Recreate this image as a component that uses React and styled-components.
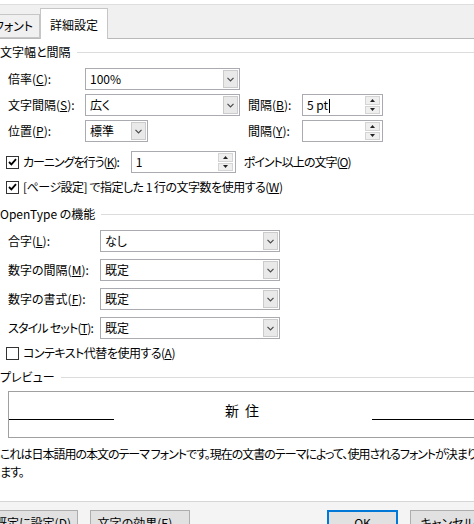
import styled, { createGlobalStyle } from "styled-components";

const GlobalStyle = createGlobalStyle`
  html, body {
    margin: 0;
    padding: 0;
    background: #ffffff;
    overflow: hidden;
  }
  body {
    font-family: "Noto Sans CJK JP", "Noto Sans", sans-serif;
    font-size: 12px;
    line-height: 16px;
    color: #000;
    font-feature-settings: "palt";
  }
  #root {
    width: 474px;
    height: 524px;
    overflow: hidden;
  }
`;

const Dialog = styled.div`
  width: 500px;
  margin-left: -12px;
  display: flex;
  flex-direction: column;
  background: #fff;
`;

const TabStrip = styled.div`
  margin-top: 4px;
  height: 33px;
  background: #f0f0f0;
  border-top: 1px solid #dedede;
  border-bottom: 1px solid #b9b9b9;
  display: flex;
  align-items: flex-end;
`;

const Tab = styled.div`
  width: ${({ $w }) => $w}px;
  height: ${({ $active }) => ($active ? 31 : 24)}px;
  margin-bottom: ${({ $active }) => ($active ? -1 : 0)}px;
  box-sizing: border-box;
  display: flex;
  align-items: center;
  justify-content: center;
  background: ${({ $active }) => ($active ? "#fff" : "#f0f0f0")};
  border: 1px solid #c6c6c6;
  border-bottom: ${({ $active }) => ($active ? "none" : "1px solid #c6c6c6")};
  border-left: ${({ $active }) => ($active ? "1px solid #c6c6c6" : "none")};
  padding-top: ${({ $active }) => ($active ? 2 : 0)}px;
`;

const Content = styled.div`
  padding-left: 12px;
  display: flex;
  flex-direction: column;
`;

const SectionTitle = styled.div`
  display: flex;
  align-items: center;
  height: 16px;
  margin-top: ${({ $mt }) => $mt}px;
  &::after {
    content: "";
    flex: 1;
    border-top: 1px solid #dcdcdc;
    margin-left: 6px;
    margin-top: 1px;
  }
`;

const FieldGrid = styled.div`
  display: grid;
  grid-template-columns: ${({ $cols }) => $cols};
  grid-auto-rows: 22px;
  row-gap: ${({ $gap }) => $gap}px;
  align-items: center;
  padding-left: 8px;
  margin-top: ${({ $mt }) => $mt}px;
`;

const Label = styled.span`
  white-space: nowrap;
  grid-column: ${({ $col }) => $col || "auto"};
  letter-spacing: ${({ $ls }) => $ls || 0}px;
`;

const Key = styled.span`
  text-decoration: underline;
  text-underline-offset: 1px;
`;

const ComboBox = styled.div`
  width: ${({ $w }) => $w}px;
  height: 22px;
  box-sizing: border-box;
  border: 1px solid #a9abb0;
  background: #fff;
  display: flex;
  align-items: center;
`;

const Value = styled.span`
  flex: 1;
  padding-left: 4px;
  white-space: nowrap;
  overflow: hidden;
`;

const DropButton = styled.span`
  width: 15px;
  height: 18px;
  margin-right: 1px;
  box-sizing: border-box;
  background: #e9e9e9;
  border: 1px solid #cbcbcb;
  display: flex;
  align-items: center;
  justify-content: center;
`;

const SpinBox = styled.div`
  width: ${({ $w }) => $w}px;
  height: 22px;
  box-sizing: border-box;
  border: 1px solid #a9abb0;
  background: #fff;
  display: flex;
  align-items: center;
  letter-spacing: 0;
`;

const SpinButtons = styled.span`
  width: 15px;
  height: 18px;
  margin-right: 2px;
  display: flex;
  flex-direction: column;
  gap: 1px;
`;

const SpinPart = styled.span`
  flex: 1;
  background: #efefef;
  border: 1px solid #d4d4d4;
  display: flex;
  align-items: center;
  justify-content: center;
`;

const Caret = styled.span`
  display: inline-block;
  width: 1px;
  height: 14px;
  background: #000;
  vertical-align: -3px;
  margin-left: 1px;
`;

const CheckRow = styled.div`
  display: flex;
  align-items: center;
  height: 22px;
  margin-top: ${({ $mt }) => $mt}px;
  padding-left: 6px;
  white-space: nowrap;
  letter-spacing: ${({ $ls }) => $ls}px;
`;

const Box = styled.span`
  width: 13px;
  height: 13px;
  box-sizing: border-box;
  border: 1px solid #333;
  background: #fff;
  display: flex;
  align-items: center;
  justify-content: center;
  margin-right: 4px;
  flex: none;
`;

const InlineSpin = styled(SpinBox)`
  margin-left: ${({ $ml }) => $ml}px;
  margin-right: 8px;
`;

const PreviewBox = styled.div`
  margin: 6px 0 0 8px;
  height: 47px;
  box-sizing: border-box;
  border: 1px solid #a0a0a0;
  border-right: none;
  display: flex;
  align-items: flex-end;
  padding-bottom: 17px;
`;

const Rule = styled.span`
  width: ${({ $w }) => ($w ? `${$w}px` : "auto")};
  flex: ${({ $w }) => ($w ? "none" : 1)};
  border-bottom: 1px solid #000;
`;

const PreviewText = styled.span`
  width: 254px;
  text-align: center;
  font-size: 14px;
  line-height: 16px;
  letter-spacing: 6px;
  margin-bottom: 2px;
  padding-left: 4px;
`;

const Description = styled.p`
  margin: 7px 0 0;
  white-space: nowrap;
  line-height: 18px;
  letter-spacing: -1px;
`;

const Footer = styled.div`
  margin-top: 20px;
  height: 40px;
  border-top: 1px solid #d6d6d6;
  background: #f4f4f4;
  display: flex;
  align-items: flex-start;
  padding: 8px 3px 0 0;
  gap: 12px;
`;

const Button = styled.button`
  width: ${({ $w }) => $w}px;
  height: 23px;
  flex: none;
  box-sizing: border-box;
  font: inherit;
  font-feature-settings: "palt";
  color: #000;
  background: #e1e1e1;
  border: 1px solid ${({ $primary }) => ($primary ? "#0078d7" : "#adadad")};
  box-shadow: ${({ $primary }) => ($primary ? "inset 0 0 0 1px #0078d7" : "none")};
  padding: 2px 0 0;
  margin-left: ${({ $push }) => ($push ? "auto" : "0")};
  white-space: nowrap;
`;

const Chevron = () => (
  <svg width="7" height="5" viewBox="0 0 7 5">
    <path d="M0.5 0.8 L3.5 3.8 L6.5 0.8" fill="none" stroke="#4a4a4a" strokeWidth="1.2" />
  </svg>
);

const Tri = ({ up }) => (
  <svg width="5" height="3" viewBox="0 0 5 3">
    <path d={up ? "M0 3 L2.5 0 L5 3 Z" : "M0 0 L5 0 L2.5 3 Z"} fill="#222" />
  </svg>
);

const Check = () => (
  <svg width="9" height="8" viewBox="0 0 9 8">
    <path d="M1 4 L3.4 6.4 L8 1.2" fill="none" stroke="#000" strokeWidth="1.8" />
  </svg>
);

function Combo({ w, children }) {
  return (
    <ComboBox $w={w}>
      <Value>{children}</Value>
      <DropButton>
        <Chevron />
      </DropButton>
    </ComboBox>
  );
}

function Spin({ w, children, as: Comp = SpinBox, ...rest }) {
  return (
    <Comp $w={w} {...rest}>
      <Value>{children}</Value>
      <SpinButtons>
        <SpinPart>
          <Tri up />
        </SpinPart>
        <SpinPart>
          <Tri />
        </SpinPart>
      </SpinButtons>
    </Comp>
  );
}

function Checkbox({ checked, children, mt, ls = 0 }) {
  return (
    <CheckRow $mt={mt} $ls={ls}>
      <Box>{checked && <Check />}</Box>
      {children}
    </CheckRow>
  );
}

export default function App() {
  return (
    <>
      <GlobalStyle />
      <Dialog>
        <TabStrip>
          <Tab $w={52}>フォント</Tab>
          <Tab $w={68} $active>
            詳細設定
          </Tab>
        </TabStrip>

        <Content>
          <SectionTitle $mt={5}>文字幅と間隔</SectionTitle>
          <FieldGrid $cols="77px 163px 54px 81px" $gap={4} $mt={8}>
            <Label $col="1">
              倍率(<Key>C</Key>):
            </Label>
            <Combo w={155}>100%</Combo>

            <Label $col="1">
              文字間隔(<Key>S</Key>):
            </Label>
            <Combo w={155}>広く</Combo>
            <Label>
              間隔(<Key>B</Key>):
            </Label>
            <Spin w={81}>
              5 pt
              <Caret />
            </Spin>

            <Label $col="1">
              位置(<Key>P</Key>):
            </Label>
            <Combo w={63}>標準</Combo>
            <Label>
              間隔(<Key>Y</Key>):
            </Label>
            <Spin w={81} />
          </FieldGrid>

          <Checkbox checked mt={9} ls={-1}>
            カーニングを行う(<Key>K</Key>):
            <Spin as={InlineSpin} w={105} $ml={12}>
              1
            </Spin>
            ポイント以上の文字(<Key>O</Key>)
          </Checkbox>
          <Checkbox checked mt={3} ls={-0.5}>
            [ページ設定] で指定した 1 行の文字数を使用する(<Key>W</Key>)
          </Checkbox>

          <SectionTitle $mt={8}>OpenType の機能</SectionTitle>
          <FieldGrid $cols="92px 180px" $gap={7} $mt={8}>
            <Label>
              合字(<Key>L</Key>):
            </Label>
            <Combo w={180}>なし</Combo>
            <Label>
              数字の間隔(<Key>M</Key>):
            </Label>
            <Combo w={180}>既定</Combo>
            <Label>
              数字の書式(<Key>F</Key>):
            </Label>
            <Combo w={180}>既定</Combo>
            <Label $ls={-0.8}>
              スタイル セット(<Key>T</Key>):
            </Label>
            <Combo w={180}>既定</Combo>
          </FieldGrid>

          <Checkbox mt={3} ls={-0.5}>
            コンテキスト代替を使用する(<Key>A</Key>)
          </Checkbox>

          <SectionTitle $mt={5}>プレビュー</SectionTitle>
          <PreviewBox>
            <Rule $w={105} />
            <PreviewText>新住</PreviewText>
            <Rule />
          </PreviewBox>
          <Description>
            これは日本語用の本文のテーマ フォントです。現在の文書のテーマによって、使用されるフォントが決まり
            <br />
            ます。
          </Description>
        </Content>

        <Footer>
          <Button $w={90}>既定に設定(<Key>D</Key>)</Button>
          <Button $w={100}>文字の効果(<Key>E</Key>)...</Button>
          <Button $w={71} $primary $push>
            OK
          </Button>
          <Button $w={75}>キャンセル</Button>
        </Footer>
      </Dialog>
    </>
  );
}
